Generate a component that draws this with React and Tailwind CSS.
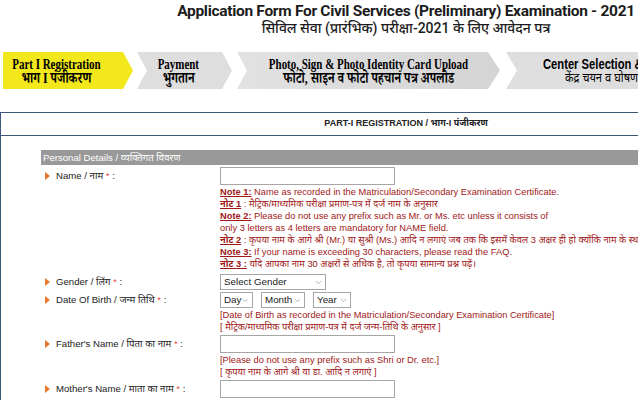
import { ChevronDown } from 'lucide-react'

const Bullet = () => (
  <svg width="5" height="8" viewBox="0 0 5 8" className="shrink-0">
    <path d="M0 0 L5 4 L0 8 Z" fill="#e8782c" />
  </svg>
)

const Label = ({ text }) => (
  <div className="flex items-center gap-[6px] pl-[4px] h-[18px] text-[#222] text-[9.6px]">
    <Bullet />
    <span>
      {text} <span className="text-[#e64545]">*</span> :
    </span>
  </div>
)

const Select = ({ label, w }) => (
  <div className={`flex items-center justify-between h-[16px] border border-[#a6a6a6] bg-white pl-[3px] pr-[2px] text-[9.8px] text-[#222] ${w}`}>
    <span>{label}</span>
    <ChevronDown size={9} strokeWidth={1.5} className="text-[#777]" />
  </div>
)

const Note = ({ tag, children }) => (
  <div className="leading-[12px] h-[12px] whitespace-nowrap">
    {tag && <span className="font-bold underline">{tag}</span>}
    {children}
  </div>
)

export default function App() {
  return (
    <div className="w-[638px] h-[400px] overflow-hidden bg-white font-['Liberation_Sans','Noto_Sans_Devanagari','Lohit_Devanagari',sans-serif]">
      <div className="w-[812px]">
        {/* Title */}
        <div className="text-center text-[#1c1c1c] font-bold pt-[2px] font-['Roboto','Noto_Sans_Devanagari',sans-serif]">
          <p className="text-[15.5px] leading-[18px] tracking-[-0.3px]">
            Application Form For Civil Services (Preliminary) Examination - 2021
          </p>
          <p className="text-[14px] leading-[17px] font-medium">
            सिविल सेवा (प्रारंभिक) परीक्षा-2021 के लिए आवेदन पत्र
          </p>
        </div>

        {/* Steps */}
        <div className="flex mt-[15px] ml-[3px] h-[37px] font-['Liberation_Serif','Noto_Serif_Devanagari',serif] font-bold text-black text-[15px] leading-[14px]">
          <div className="w-[130px] bg-[#f2e81c] [clip-path:polygon(0_0,120px_0,100%_50%,120px_100%,0_100%)] flex flex-col items-center justify-center pr-[24px]">
            <span className="scale-x-[0.73] whitespace-nowrap">Part I Registration</span>
            <span className="scale-x-[0.8] whitespace-nowrap">भाग I पंजीकरण</span>
          </div>
          <div className="w-[95px] ml-[4px] bg-[#dedede] [clip-path:polygon(0_0,85px_0,100%_50%,85px_100%,0_100%,10px_50%)] flex flex-col items-center justify-center pr-[12px]">
            <span className="scale-x-[0.73]">Payment</span>
            <span className="scale-x-[0.8]">भुगतान</span>
          </div>
          <div className="w-[263px] ml-[5px] bg-gradient-to-r from-[#e2e2e2] to-[#d4d4d4] [clip-path:polygon(0_0,251px_0,100%_50%,251px_100%,0_100%,10px_50%)] flex flex-col items-center justify-center">
            <span className="scale-x-[0.73] whitespace-nowrap">Photo, Sign &amp; Photo Identity Card Upload</span>
            <span className="scale-x-[0.8] whitespace-nowrap">फोटो, साइन व फोटो पहचान पत्र अपलोड</span>
          </div>
          <div className="w-[260px] ml-[6px] bg-[#dedede] [clip-path:polygon(0_0,100%_0,100%_100%,0_100%,11px_50%)] flex flex-col items-start justify-center pl-[37px] font-['Liberation_Sans','Noto_Sans_Devanagari',sans-serif]">
            <span className="text-[14px] whitespace-nowrap origin-left scale-x-[0.8]">Center Selection &amp; Declaration</span>
            <span className="text-[13px] whitespace-nowrap ml-[22px] origin-left scale-x-[0.85] font-normal">केंद्र चयन व घोषणा</span>
          </div>
        </div>

        {/* Form box */}
        <div className="mt-[23px] border border-[#3a5878] h-[300px]">
          <div className="h-[23px] border-b border-[#3a5878] flex items-center justify-center text-[9px] font-bold text-[#222]">
            PART-I REGISTRATION / भाग-I पंजीकरण
          </div>
          <div className="pl-[40px] pt-[14px]">
            <div className="h-[15px] bg-[#999] text-white text-[9.6px] leading-[15px] pl-[2px]">
              Personal Details / व्यक्तिगत विवरण
            </div>

            {/* Name */}
            <div className="grid grid-cols-[179px_1fr] mt-[2px]">
              <Label text="Name / नाम" />
              <div>
                <div className="w-[175px] h-[18px] border border-[#a6a6a6] bg-white" />
                <div className="mt-[1px] text-[9.3px] text-[#a01818]">
                  <Note tag="Note 1:"> Name as recorded in the Matriculation/Secondary Examination Certificate.</Note>
                  <Note tag="नोट 1"> : मैट्रिक/माध्यमिक परीक्षा प्रमाण-पत्र में दर्ज नाम के अनुसार</Note>
                  <Note tag="Note 2:"> Please do not use any prefix such as Mr. or Ms. etc unless it consists of</Note>
                  <Note>only 3 letters as 4 letters are mandatory for NAME field.</Note>
                  <Note tag="नोट 2"> : कृपया नाम के आगे श्री (Mr.) या सुश्री (Ms.) आदि न लगाएं जब तक कि इसमें केवल 3 अक्षर ही हो क्योंकि नाम के स्थान पर 4 अक्षर अनिवार्य हैं</Note>
                  <Note tag="Note 3:"> If your name is exceeding 30 characters, please read the FAQ.</Note>
                  <Note tag="नोट 3 :"> यदि आपका नाम 30 अक्षरों से अधिक है, तो कृपया सामान्य प्रश्न पढ़ें।</Note>
                </div>
              </div>
            </div>

            {/* Gender */}
            <div className="grid grid-cols-[179px_1fr] mt-[4px]">
              <div className="h-[16px] flex items-center"><Label text="Gender / लिंग" /></div>
              <Select label="Select Gender" w="w-[106px]" />
            </div>

            {/* DOB */}
            <div className="grid grid-cols-[179px_1fr] mt-[2px]">
              <div className="h-[16px] flex items-center"><Label text="Date Of Birth / जन्म तिथि" /></div>
              <div>
                <div className="flex gap-[8px]">
                  <Select label="Day" w="w-[33px]" />
                  <Select label="Month" w="w-[44px]" />
                  <Select label="Year" w="w-[38px]" />
                </div>
                <div className="mt-[1px] text-[9.3px] text-[#a01818]">
                  <Note>[Date of Birth as recorded in the Matriculation/Secondary Examination Certificate]</Note>
                  <Note>[ मैट्रिक/माध्यमिक परीक्षा प्रमाण-पत्र में दर्ज जन्म-तिथि के अनुसार ]</Note>
                </div>
              </div>
            </div>

            {/* Father */}
            <div className="grid grid-cols-[179px_1fr] mt-[2px]">
              <Label text="Father's Name / पिता का नाम" />
              <div>
                <div className="w-[175px] h-[18px] border border-[#a6a6a6] bg-white" />
                <div className="mt-[1px] text-[9.3px] text-[#a01818]">
                  <Note>[Please do not use any prefix such as Shri or Dr. etc.]</Note>
                  <Note>[ कृपया नाम के आगे श्री या डा. आदि न लगाएं ]</Note>
                </div>
              </div>
            </div>

            {/* Mother */}
            <div className="grid grid-cols-[179px_1fr] mt-[2px]">
              <Label text="Mother's Name / माता का नाम" />
              <div className="w-[175px] h-[18px] border border-[#a6a6a6] bg-white" />
            </div>
          </div>
        </div>
      </div>
    </div>
  )
}
